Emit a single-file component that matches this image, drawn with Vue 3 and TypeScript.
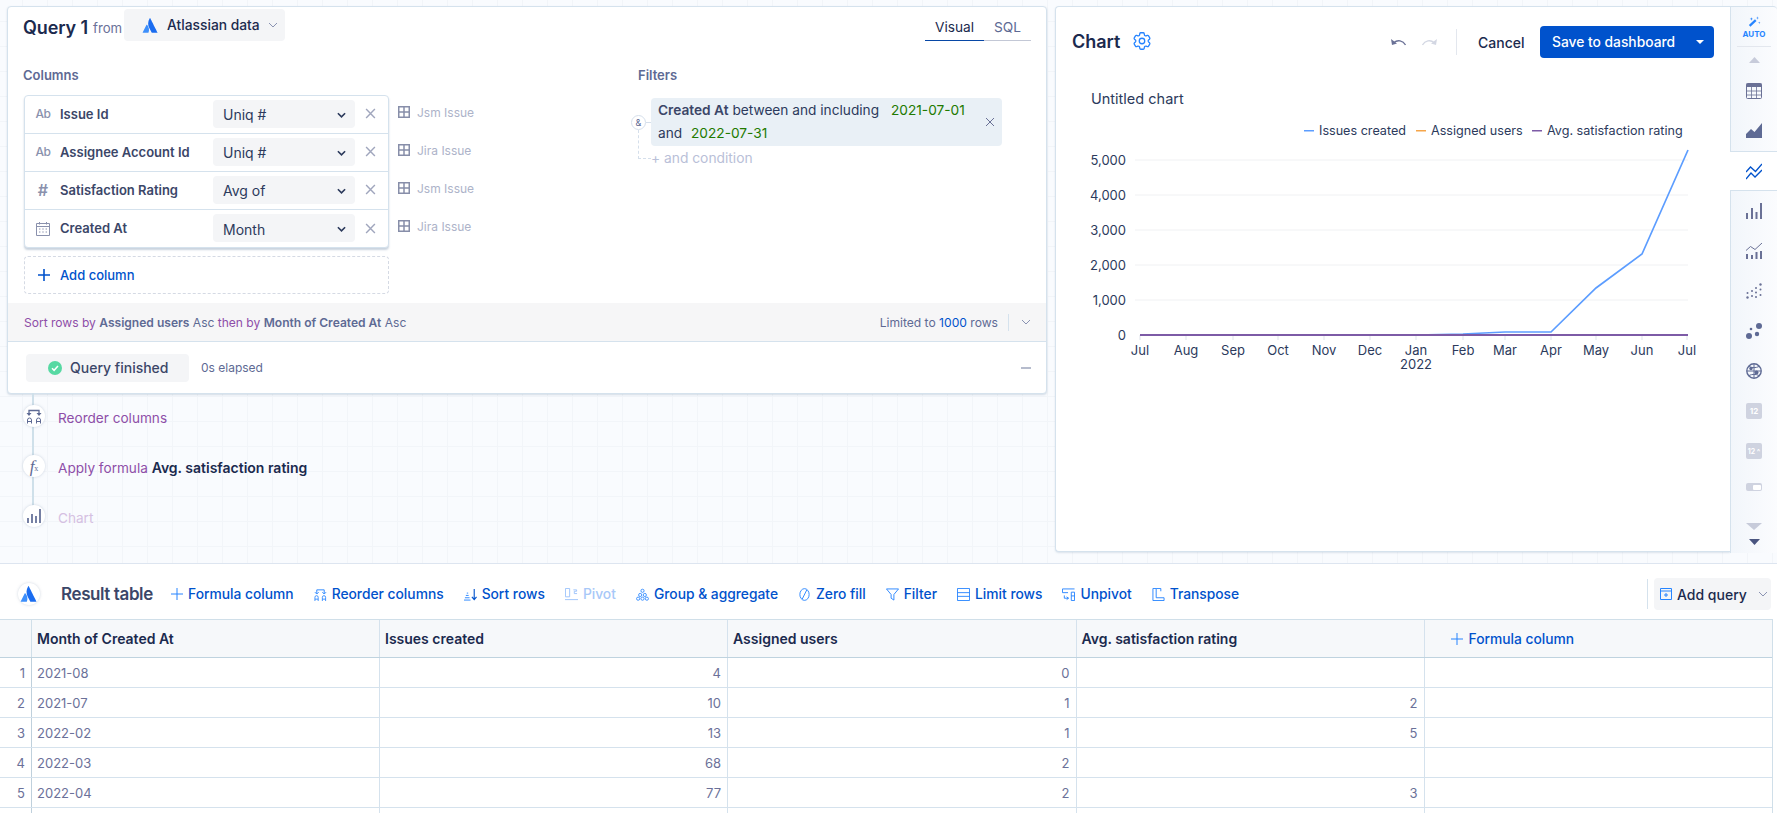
<script setup lang="ts">
interface ColumnRow { type: string; name: string; agg: string; table: string }
const columns: ColumnRow[] = [
  { type: 'ab', name: 'Issue Id', agg: 'Uniq #', table: 'Jsm Issue' },
  { type: 'ab', name: 'Assignee Account Id', agg: 'Uniq #', table: 'Jira Issue' },
  { type: 'num', name: 'Satisfaction Rating', agg: 'Avg of', table: 'Jsm Issue' },
  { type: 'date', name: 'Created At', agg: 'Month', table: 'Jira Issue' },
]
const rows: (string | number)[][] = [
  ['2021-08', 4, 0, ''],
  ['2021-07', 10, 1, 2],
  ['2022-02', 13, 1, 5],
  ['2022-03', 68, 2, ''],
  ['2022-04', 77, 2, 3],
]
const gridY = [160, 195, 230, 265, 300]
const yLabels = ['5,000', '4,000', '3,000', '2,000', '1,000', '0']
const xTicks = [
  ['Jul', 1140], ['Aug', 1186], ['Sep', 1233], ['Oct', 1278], ['Nov', 1324], ['Dec', 1370], ['Jan', 1416],
  ['Feb', 1463], ['Mar', 1505], ['Apr', 1551], ['May', 1596], ['Jun', 1642], ['Jul', 1687],
] as [string, number][]
const bluePts = '1140,335 1416,335 1463,334 1505,332 1551,332 1596,288 1642,254 1688,150'
const legend = [
  { x: 1304, color: '#5c9dff', label: 'Issues created' },
  { x: 1416, color: '#f5a54a', label: 'Assigned users' },
  { x: 1532, color: '#7d5ba6', label: 'Avg. satisfaction rating' },
]
</script>

<template>
  <div class="app">
    <div class="canvas">
      <div class="left">
        <section class="query-card">
          <header class="query-head">
            <h1 class="query-title">Query 1</h1>
            <span class="from">from</span>
            <div class="source-chip">
              <svg class="logo" viewBox="0 0 24 24"><path fill="#3d8ffb" d="M7.12 11.08c-.25-.32-.71-.28-.9.09L1.06 21.5a.53.53 0 0 0 .47.77h7.2a.52.52 0 0 0 .47-.3c1.55-3.2.61-8.07-2.08-10.89z"/><path fill="#1a6cf0" d="M10.92 1.73c-2.9 4.6-2.7 9.7-.8 13.5l3.5 6.74a.53.53 0 0 0 .47.3h7.2a.53.53 0 0 0 .47-.77S11.9 2.2 11.72 1.73a.45.45 0 0 0-.8 0z"/></svg>
              <span>Atlassian data</span>
              <svg class="chev" viewBox="0 0 10 6"><path d="M1 1l4 4 4-4" fill="none" stroke="#8a93b2" stroke-width="1"/></svg>
            </div>
            <div class="tabs">
              <span class="tab active">Visual</span>
              <span class="tab">SQL</span>
            </div>
          </header>
          <div class="builder">
            <div class="col-area">
              <h2 class="label">Columns</h2>
              <div class="col-wrap">
                <div class="col-list">
                  <div v-for="c in columns" :key="c.name" class="col-row">
                    <span class="type-ic">
                      <span v-if="c.type === 'ab'" class="ab">Ab</span>
                      <span v-else-if="c.type === 'num'" class="hash">#</span>
                      <svg v-else viewBox="0 0 14 15" width="14" height="15"><path d="M.5 2.5h13v12H.5zM.5 5.5h13M3.5 1v2.5M10.5 1v2.5" fill="none" stroke="#8a91ad"/><path d="M3 8h1.4M6.3 8h1.4M9.6 8H11M3 11h1.4M6.3 11h1.4M9.6 11H11" stroke="#8a91ad"/></svg>
                    </span>
                    <span class="col-name">{{ c.name }}</span>
                    <div class="agg">
                      <span>{{ c.agg }}</span>
                      <svg viewBox="0 0 10 6" width="9" height="6"><path d="M1 1l4 4 4-4" fill="none" stroke="#2c3a5c" stroke-width="1.8"/></svg>
                    </div>
                    <svg class="x" viewBox="0 0 10 10" width="11" height="11"><path d="M1 1l8 8M9 1L1 9" stroke="#a0a6bd" stroke-width="1.3"/></svg>
                  </div>
                </div>
                <div class="col-tables">
                  <div v-for="c in columns" :key="c.name + 't'" class="col-table">
                    <svg viewBox="0 0 12 12" width="12" height="12"><path d="M.75.75h10.5v10.5H.75zM6 .75v10.5M.75 6h10.5" fill="none" stroke="#878ea9" stroke-width="1.5"/></svg>
                    <span>{{ c.table }}</span>
                  </div>
                </div>
              </div>
              <div class="add-col">
                <svg viewBox="0 0 12 12" width="12" height="12"><path d="M6 0v12M0 6h12" stroke="#0052cc" stroke-width="1.6"/></svg>
                <span>Add column</span>
              </div>
            </div>
            <div class="filter-area">
              <h2 class="label">Filters</h2>
              <div class="filter-body">
                <div class="connector">
                  <span class="amp">&amp;</span>
                  <span class="conn-h"></span>
                  <span class="conn-v"></span>
                </div>
                <div class="filter-main">
                  <div class="filter-chip">
                    <p class="filter-text"><b>Created At</b> between and including <em class="val first">2021-07-01</em><br>and <em class="val">2022-07-31</em></p>
                    <svg viewBox="0 0 10 10" width="10" height="10"><path d="M1 1l8 8M9 1L1 9" stroke="#6a7196" stroke-width="1"/></svg>
                  </div>
                  <div class="and-cond">+ and condition</div>
                </div>
              </div>
            </div>
          </div>
          <div class="sort-bar">
            <p class="sort-text">Sort rows by <b>Assigned users</b> <i>Asc</i> then by <b>Month of Created At</b> <i>Asc</i></p>
            <div class="limit">
              <span>Limited to <strong>1000</strong> rows</span>
              <span class="sort-sep"></span>
              <svg viewBox="0 0 10 6" width="10" height="6"><path d="M1 1l4 4 4-4" fill="none" stroke="#8a93b2"/></svg>
            </div>
          </div>
          <div class="status">
            <div class="status-chip">
              <svg viewBox="0 0 14 14" width="14" height="14"><circle cx="7" cy="7" r="7" fill="#57d9a3"/><path d="M4 7.2l2.1 2.1L10 5" fill="none" stroke="#fff" stroke-width="1.5"/></svg>
              <span>Query finished</span>
            </div>
            <span class="elapsed">0s elapsed</span>
            <span class="minimize"></span>
          </div>
        </section>
        <ol class="steps">
          <li class="step">
            <span class="step-ic"><svg viewBox="0 0 16 16" width="16" height="16"><path d="M3 7V2.500h10V7" fill="none" stroke="#5e6a94" stroke-width="1.300"/><path d="M.5 5h5L3 8zM10.500 5h5L13 8z" fill="#5e6a94"/><path d="M1.500 15.500v-3.500a2 2 0 0 1 4 0v3.500M1.500 13.500h4M10.500 15.500v-3.500a2 2 0 0 1 4 0v3.500M10.500 13.500h4" fill="none" stroke="#5e6a94"/></svg></span>
            <span class="step-text">Reorder columns</span>
          </li>
          <li class="step">
            <span class="step-ic fx"><i>f</i><small>x</small></span>
            <span class="step-text">Apply formula <b>Avg. satisfaction rating</b></span>
          </li>
          <li class="step">
            <span class="step-ic"><svg viewBox="0 0 14 14" width="14" height="14"><path d="M1 14V9M5 14V5M9 14V7M13 14V0" stroke="#5e6a94" stroke-width="1.7"/></svg></span>
            <span class="step-text faded">Chart</span>
          </li>
        </ol>
      </div>

      <section class="chart-card">
        <header class="chart-head">
          <h2 class="chart-title">Chart</h2>
          <svg class="gear" viewBox="0 0 24 24" width="22" height="22"><path fill="none" stroke="#2684ff" stroke-width="1.4" d="M9.594 3.94c.09-.542.56-.94 1.11-.94h2.593c.55 0 1.02.398 1.11.94l.213 1.281c.063.374.313.686.645.87.074.04.147.083.22.127.325.196.72.257 1.075.124l1.217-.456a1.125 1.125 0 0 1 1.37.49l1.296 2.247a1.125 1.125 0 0 1-.26 1.431l-1.003.827c-.293.241-.438.613-.43.992a7.723 7.723 0 0 1 0 .255c-.008.378.137.75.43.991l1.004.827c.424.35.534.955.26 1.43l-1.298 2.247a1.125 1.125 0 0 1-1.369.491l-1.217-.456c-.355-.133-.75-.072-1.076.124a6.47 6.47 0 0 1-.22.128c-.331.183-.581.495-.644.869l-.213 1.281c-.09.543-.56.94-1.11.94h-2.594c-.55 0-1.019-.398-1.11-.94l-.213-1.281c-.062-.374-.312-.686-.644-.87a6.52 6.52 0 0 1-.22-.127c-.325-.196-.72-.257-1.076-.124l-1.217.456a1.125 1.125 0 0 1-1.369-.49l-1.297-2.247a1.125 1.125 0 0 1 .26-1.431l1.004-.827c.292-.24.437-.613.43-.991a6.932 6.932 0 0 1 0-.255c.007-.38-.138-.751-.43-.992l-1.004-.827a1.125 1.125 0 0 1-.26-1.43l1.297-2.247a1.125 1.125 0 0 1 1.37-.491l1.216.456c.356.133.751.072 1.076-.124.072-.044.146-.086.22-.128.332-.183.582-.495.644-.869l.214-1.28Z"/><circle cx="12" cy="12" r="3" fill="none" stroke="#2684ff" stroke-width="1.4"/></svg>
          <div class="chart-actions">
            <svg viewBox="0 0 16 8" width="16" height="8"><path d="M15.500 7C13 2.500 7.500 1.500 4 4.500" fill="none" stroke="#6a7196" stroke-width="1.300"/><path d="M1 1l1 6 5-1.500z" fill="#6a7196"/></svg>
            <svg class="redo" viewBox="0 0 16 8" width="16" height="8"><path d="M.5 7C3 2.500 8.500 1.500 12 4.500" fill="none" stroke="#d3d7e3" stroke-width="1.300"/><path d="M15 1l-1 6-5-1.500z" fill="#d3d7e3"/></svg>
            <span class="act-sep"></span>
            <span class="cancel">Cancel</span>
            <div class="save">
              <span class="save-label">Save to dashboard</span>
              <svg viewBox="0 0 8 4" width="8" height="4"><path d="M0 0h8L4 4z" fill="#fff"/></svg>
            </div>
          </div>
        </header>
        <svg class="plot" viewBox="1056 77 673 300" width="673" height="300">
          <text x="1091" y="104" class="c-title">Untitled chart</text>
          <g v-for="l in legend" :key="l.label">
            <rect :x="l.x" y="130" width="10" height="1.5" :fill="l.color" />
            <text :x="l.x + 15" y="135" class="c-legend">{{ l.label }}</text>
          </g>
          <line v-for="y in gridY" :key="y" x1="1135" :y1="y" x2="1688" :y2="y" stroke="#f0f1f3" />
          <text v-for="(l, i) in yLabels" :key="l" x="1126" :y="165 + i * 35" text-anchor="end" class="c-text">{{ l }}</text>
          <line v-for="t in xTicks" :key="t[1]" :x1="t[1]" y1="335" :x2="t[1]" y2="340" stroke="#dfe3ea" />
          <text v-for="t in xTicks" :key="t[0] + t[1]" :x="t[1]" y="355" text-anchor="middle" class="c-text">{{ t[0] }}</text>
          <text x="1416" y="369" text-anchor="middle" class="c-text">2022</text>
          <polyline :points="bluePts" fill="none" stroke="#5c9dff" stroke-width="1.7" />
          <line x1="1140" y1="335" x2="1688" y2="335" stroke="#f5a54a" stroke-width="1.500" />
          <line x1="1140" y1="335" x2="1688" y2="335" stroke="#7d5ba6" stroke-width="2" />
        </svg>
      </section>

      <aside class="types">
        <div class="type-sec upper">
          <div class="auto">
            <svg viewBox="0 0 16 12" width="14" height="11"><path d="M3 11L10 4.500" stroke="#2684ff" stroke-width="2.600"/><path d="M5 1l.5 1.500L7 3 5.500 3.500 5 5l-.5-1.500L3 3l1.500-.5zM12 0l.4 1.600L14 2l-1.600.4L12 4l-.4-1.600L10 2l1.600-.4zM14 6l.3 1.200 1.200.3-1.200.3L14 9l-.3-1.200-1.200-.3 1.200-.3z" fill="#2684ff"/></svg>
            <span>AUTO</span>
          </div>
          <div class="tri-row"><svg viewBox="0 0 11 6" width="11" height="6"><path d="M0 6h11L5.500 0z" fill="#c7cbda"/></svg></div>
          <div class="ic-row"><svg viewBox="0 0 16 16" width="16" height="16"><rect x=".5" y=".5" width="15" height="15" rx="1" fill="none" stroke="#6a7196"/><rect x=".5" y=".5" width="15" height="3.500" fill="#6a7196"/><path d="M.5 8h15M.5 12h15M5.500 4v12M10.500 4v12" stroke="#6a7196" stroke-width=".8"/></svg></div>
          <div class="ic-row"><svg viewBox="0 0 16 16" width="16" height="16"><path d="M0 15l0-4 5-5 3.500 3L16 0v15z" fill="#5e6a94"/></svg></div>
        </div>
        <div class="type-sec active-type">
          <svg viewBox="0 0 16 17" width="16" height="17"><path d="M0 9l4.500-5 5 4.500L16 1M0 16l5-6 4 4 7-7" fill="none" stroke="#0052cc" stroke-width="1.300"/></svg>
        </div>
        <div class="type-sec lower">
          <div class="ic-row"><svg viewBox="0 0 16 16" width="16" height="16"><path d="M1 16v-6M6 16V5M10.500 16v-7M15 16V0" stroke="#6a7196" stroke-width="2"/></svg></div>
          <div class="ic-row"><svg viewBox="0 0 16 16" width="16" height="16"><path d="M1 16v-5M6 16v-4M10.500 16v-7M15 16V8" stroke="#6a7196" stroke-width="2"/><path d="M0 7.500l4.500-4 4.500 3L16 0" fill="none" stroke="#6a7196"/></svg></div>
          <div class="ic-row"><svg viewBox="0 0 16 16" width="16" height="16"><g fill="#6a7196"><circle cx="1.500" cy="14.500" r="1.200"/><circle cx="1.500" cy="10" r="1"/><circle cx="6" cy="13" r="1"/><circle cx="6" cy="8" r="1"/><circle cx="10" cy="14" r="1"/><circle cx="10" cy="9.500" r="1"/><circle cx="10" cy="5" r="1"/><circle cx="14.500" cy="12" r="1"/><circle cx="14.500" cy="6.500" r="1"/><circle cx="14.500" cy="1.500" r="1.200"/></g></svg></div>
          <div class="ic-row"><svg viewBox="0 0 16 16" width="16" height="16"><g fill="#5e6a94"><circle cx="3" cy="13" r="3"/><circle cx="11" cy="11" r="2.200"/><circle cx="5" cy="6" r="1.300"/><circle cx="13" cy="3" r="3"/></g></svg></div>
          <div class="ic-row"><svg viewBox="0 0 16 16" width="16" height="16"><circle cx="8" cy="8" r="7.200" fill="none" stroke="#5e6a94" stroke-width="1.400"/><path d="M1 8h14M8 1v14M3 3.500c3 1.500 7 1.500 10 0M3 12.500c3-1.500 7-1.500 10 0" fill="none" stroke="#5e6a94"/><circle cx="5" cy="5.500" r="1.700" fill="#5e6a94"/><circle cx="10.500" cy="9.500" r="2" fill="#5e6a94"/></svg></div>
          <div class="ic-row"><span class="num-box">12</span></div>
          <div class="ic-row"><span class="num-box small">12 ^</span></div>
          <div class="ic-row ic-high"><span class="toggle"><span></span></span></div>
          <div class="ic-row ic-high"><svg viewBox="0 0 16 7" width="16" height="7"><path d="M0 0h16L8 7z" fill="#c7cbda"/></svg></div>
          <div class="dark-row"><svg viewBox="0 0 11 6" width="11" height="6"><path d="M0 0h11L5.500 6z" fill="#4a5580"/></svg></div>
        </div>
      </aside>
    </div>

    <section class="result">
      <div class="toolbar">
        <span class="res-logo"><svg viewBox="0 0 24 24" width="18" height="18"><path fill="#3d8ffb" d="M7.12 11.08c-.25-.32-.71-.28-.9.09L1.06 21.5a.53.53 0 0 0 .47.77h7.2a.52.52 0 0 0 .47-.3c1.55-3.2.61-8.07-2.08-10.89z"/><path fill="#1a6cf0" d="M10.92 1.73c-2.9 4.6-2.7 9.7-.8 13.5l3.5 6.74a.53.53 0 0 0 .47.3h7.2a.53.53 0 0 0 .47-.77S11.9 2.2 11.72 1.73a.45.45 0 0 0-.8 0z"/></svg></span>
        <h2 class="res-title">Result table</h2>
        <div class="tools">
          <button class="tool"><svg viewBox="0 0 12 12" width="12" height="12"><path d="M6 0v12M0 6h12" stroke="#2684ff"/></svg><span>Formula column</span></button>
          <button class="tool"><svg viewBox="0 0 14 14" width="13" height="13"><path d="M3 6V2h8v4M1 4.500l2 2 2-2M9 4.500l2 2 2-2" fill="none" stroke="#2684ff"/><path d="M1 14v-4a1.500 1.500 0 0 1 3.500 0v4M1 12h3.500M9 14v-4a1.500 1.500 0 0 1 3.500 0v4M9 12h3.500" fill="none" stroke="#2684ff" stroke-width=".9"/></svg><span>Reorder columns</span></button>
          <button class="tool"><svg viewBox="0 0 14 14" width="13" height="13"><path d="M0 13h7M1 10.500h5M2 8h3M3 5.500h1.500" stroke="#2684ff"/><path d="M11 1v11M8.500 9.500L11 12.500l2.500-3" fill="none" stroke="#0052cc" stroke-width="1.200"/></svg><span>Sort rows</span></button>
          <button class="tool off"><svg viewBox="0 0 14 14" width="13" height="13"><path d="M.5.500h4.500v9H.5zM0 12.500h14" fill="none" stroke="#9cc2fb"/><path d="M9 2h3.500v1.500H10V6h3" fill="none" stroke="#9cc2fb"/></svg><span>Pivot</span></button>
          <button class="tool"><svg viewBox="0 0 14 14" width="13" height="13"><g fill="none" stroke="#2684ff" stroke-width=".9"><circle cx="7" cy="3" r="1.700"/><circle cx="4.500" cy="7.500" r="1.700"/><circle cx="9.500" cy="7.500" r="1.700"/><circle cx="2.300" cy="11.500" r="1.700"/><circle cx="7" cy="11.500" r="1.700"/><circle cx="11.700" cy="11.500" r="1.700"/></g></svg><span>Group &amp; aggregate</span></button>
          <button class="tool"><svg viewBox="0 0 14 14" width="13" height="13"><ellipse cx="7" cy="7" rx="5" ry="6.300" fill="none" stroke="#2684ff"/><path d="M4.500 12L9.500 2" stroke="#2684ff"/></svg><span>Zero fill</span></button>
          <button class="tool"><svg viewBox="0 0 14 14" width="13" height="13"><path d="M.5 1h13L8.500 7v6l-3-2V7z" fill="none" stroke="#2684ff"/></svg><span>Filter</span></button>
          <button class="tool"><svg viewBox="0 0 14 14" width="13" height="13"><path d="M.5.500h13v13H.5zM.5 5h13M.5 9h13" fill="none" stroke="#2684ff"/></svg><span>Limit rows</span></button>
          <button class="tool"><svg viewBox="0 0 14 14" width="13" height="13"><path d="M.5 1h13M.5 1v4h6M10 4.500h3.500v9H10zM10 8.500h3.500" fill="none" stroke="#2684ff"/><path d="M2.500 8v3H7M5 9.500l2 1.500-2 1.500" fill="none" stroke="#2684ff"/></svg><span>Unpivot</span></button>
          <button class="tool"><svg viewBox="0 0 14 14" width="13" height="13"><path d="M1 13.500h12v-3H4.500V.5H1zM4.500.5h5v3" fill="none" stroke="#2684ff"/></svg><span>Transpose</span></button>
        </div>
        <span class="tool-sep"></span>
        <div class="add-query">
          <svg viewBox="0 0 12 12" width="12" height="12"><path d="M.5.500h11v11H.5zM.5 3h11" fill="none" stroke="#2684ff"/><path d="M6 5v4M4 7h4" stroke="#2684ff"/></svg>
          <span>Add query</span>
          <svg class="q-chev" viewBox="0 0 10 6" width="10" height="6"><path d="M1 1l4 4 4-4" fill="none" stroke="#8a93b2"/></svg>
        </div>
      </div>
      <div class="table">
        <div class="tr th">
          <div class="idx"></div>
          <div class="cell">Month of Created At</div>
          <div class="cell">Issues created</div>
          <div class="cell">Assigned users</div>
          <div class="cell">Avg. satisfaction rating</div>
          <div class="cell formula">
            <svg viewBox="0 0 12 12" width="12" height="12"><path d="M6 0v12M0 6h12" stroke="#2684ff"/></svg>
            <span>Formula column</span>
          </div>
        </div>
        <div v-for="(r, i) in rows" :key="i" class="tr">
          <div class="idx">{{ i + 1 }}</div>
          <div class="cell">{{ r[0] }}</div>
          <div class="cell num">{{ r[1] }}</div>
          <div class="cell num">{{ r[2] }}</div>
          <div class="cell num">{{ r[3] }}</div>
          <div class="cell"></div>
        </div>
        <div class="tr">
          <div class="idx"></div>
          <div class="cell"></div>
          <div class="cell"></div>
          <div class="cell"></div>
          <div class="cell"></div>
          <div class="cell"></div>
        </div>
      </div>
    </section>
  </div>
</template>

<style>
html, body { margin: 0; overflow: hidden; background: #fff; }
</style>

<style scoped>
* { box-sizing: border-box; }
h1, h2, p, ol { margin: 0; padding: 0; }
.app {
  width: 1777px; height: 813px; overflow: hidden; display: flex; flex-direction: column;
  font-family: Inter, "Noto Sans", sans-serif; color: #1b2a4e; font-size: 13px;
}
.canvas {
  height: 563px; flex: none; display: flex; align-items: flex-start; padding-top: 6px; padding-left: 7px;
  background-color: #f9fbfe;
  background-image: linear-gradient(#f2f5f9 1px, transparent 1px), linear-gradient(90deg, #f2f5f9 1px, transparent 1px);
  background-size: 25px 25px; background-position: 22px 21px;
}
.left { width: 1040px; flex: none; }
.query-card {
  height: 388px; background: #fff; border: 1px solid #d5e2ed; border-radius: 4px;
  box-shadow: 0 1px 2px rgba(100, 130, 160, .25); display: flex; flex-direction: column; overflow: hidden;
}
.query-head { height: 38px; display: flex; align-items: flex-start; padding-left: 15px; padding-right: 15px; flex: none; }
.query-title { font-size: 18px; font-weight: 600; line-height: 20px; margin-top: 11px; letter-spacing: -.1px; }
.from { font-size: 13.200px; color: #6b7199; margin-left: 5px; margin-top: 12px; line-height: 18px; width: 31px; }
.source-chip {
  margin-top: 2px; width: 161px; height: 32px; background: #f4f5f7; border-radius: 4px;
  display: flex; align-items: center; padding-left: 18px; font-size: 13.800px; font-weight: 500;
}
.logo { width: 17px; height: 17px; margin-right: 8px; }
.chev { width: 10px; height: 6px; margin-left: 8px; }
.tabs { margin-left: auto; display: flex; margin-top: 6px; }
.tab { height: 28px; padding: 5px 0 0 10px; width: 47px; font-size: 13.700px; color: #5e6a94; border-bottom: 1px solid #c3c8d6; line-height: 18px; }
.tab.active { width: 59px; padding-left: 10px; color: #1b2a4e; border-bottom: 1px solid #0747a6; }
.builder { flex: 1; display: flex; padding: 21px 0 0 15px; min-height: 0; }
.label { font-size: 13px; font-weight: 600; color: #5e6a94; line-height: 18px; height: 23px; }
.col-area { width: 615px; }
.col-wrap { display: flex; margin-top: 6px; margin-left: 1px; }
.col-list {
  width: 365px; border: 1px solid #d5e2ed; border-radius: 4px; box-shadow: 0 2px 2px rgba(100, 130, 160, .35);
  background: #fff; flex: none;
}
.col-row { height: 38px; display: flex; align-items: center; padding-left: 11px; padding-bottom: 2px; border-bottom: 1px solid #d5e2ed; }
.col-row:last-child { border-bottom: 0; height: 37px; padding-bottom: 1px; }
.type-ic { width: 14px; display: flex; justify-content: center; flex: none; }
.ab { font-size: 12px; color: #8a91ad; font-weight: 500; letter-spacing: -.5px; }
.hash { font-size: 16px; color: #8a91ad; font-weight: 600; }
.col-name { margin-left: 10px; width: 153px; font-weight: 600; font-size: 13px; color: #3b4668; white-space: nowrap; flex: none; }
.agg {
  width: 142px; height: 28px; background: #f4f5f7; border-radius: 4px; display: flex; align-items: center; flex: none;
  justify-content: space-between; padding: 2px 9px 0 10px; font-size: 14px; color: #2c3a5c;
}
.x { margin-left: 10px; flex: none; }
.col-tables { margin-left: 9px; }
.col-table { height: 38px; display: flex; align-items: center; color: #adb3c9; font-size: 12px; gap: 7px; padding-bottom: 4px; }
.add-col {
  width: 365px; height: 38px; margin-top: 8px; margin-left: 1px; border: 1px dashed #d5dae4; border-radius: 4px;
  display: flex; align-items: center; padding: 0 0 1px 13px; gap: 10px; color: #0052cc; font-size: 13px; font-weight: 500;
}
.filter-area { width: 400px; }
.filter-body { display: flex; margin-top: 9px; margin-left: -7px; position: relative; }
.connector { width: 20px; position: relative; flex: none; }
.amp {
  position: absolute; left: 0; top: 17px; width: 15px; height: 15px; border-radius: 50%; border: 1px solid #d5dfeb;
  background: #fff; font-size: 9px; color: #5e6a94; display: flex; align-items: center; justify-content: center;
}
.conn-h { position: absolute; left: 15px; top: 24px; width: 5px; border-top: 1px solid #d5dfeb; }
.conn-v { position: absolute; left: 7px; top: 32px; height: 29px; width: 13px; border-left: 1px dashed #d5dfeb; border-bottom: 1px dashed #d5dfeb; }
.filter-chip {
  width: 351px; height: 48px; background: #e9f0f6; border-radius: 4px; display: flex; align-items: center;
  justify-content: space-between; padding: 0 7px 0 7px;
}
.filter-text { font-size: 13.700px; line-height: 23px; color: #2c3a5c; white-space: nowrap; }
.filter-text b { font-weight: 600; color: #3b4668; }
.val { font-style: normal; color: #217a00; margin-left: 5px; }
.val.first { margin-left: 8px; }
.and-cond { color: #b9c0d8; font-size: 13.800px; line-height: 18px; margin-top: 3px; }
.sort-bar {
  height: 39px; flex: none; background: #f6f6f7; border-bottom: 1px solid #d5e2ed; display: flex; align-items: center;
  justify-content: space-between; padding: 0 15px 0 16px; font-size: 12.050px;
}
.sort-text { color: #8e4ea8; }
.sort-text b { font-weight: 600; color: #5e6a94; }
.sort-text i { font-style: normal; color: #5e6a94; }
.limit { display: flex; align-items: center; color: #5e6a94; font-size: 12.100px; }
.limit strong { font-weight: 400; color: #0052cc; }
.sort-sep { height: 17px; width: 1px; background: #d5e2ed; margin: 0 12px 0 10px; }
.status { height: 51px; flex: none; display: flex; align-items: center; padding: 0 15px 0 18px; }
.status-chip {
  width: 163px; height: 28px; background: #f4f5f7; border-radius: 4px; display: flex; align-items: center;
  padding-left: 22px; gap: 8px; font-size: 14px; font-weight: 500; color: #3b4668;
}
.elapsed { margin-left: 12px; font-size: 12px; color: #5e6a94; }
.minimize { margin-left: auto; width: 10px; border-top: 2px solid #b6bccd; }
.steps { list-style: none; padding: 11px 0 0 16px; position: relative; }
.step { height: 50px; display: flex; align-items: flex-start; position: relative; }
.step::before { content: ""; position: absolute; left: 9px; top: -12px; height: 50px; width: 2px; background: #cfe0ea; }
.step:last-child::before { height: 14px; }
.step-ic {
  width: 22px; height: 22px; border-radius: 50%; background: #fff; box-shadow: 0 0 3px rgba(120, 140, 170, .35);
  display: flex; align-items: center; justify-content: center; position: relative; flex: none;
}
.fx { font-family: "Liberation Serif", serif; color: #5e6a94; font-size: 17px; line-height: 1; }
.fx small { font-size: 8px; margin-top: 5px; }
.step-text { margin-left: 13px; font-size: 13.600px; line-height: 26px; color: #8e4ea8; }
.step-text b { font-weight: 600; font-size: 14px; color: #1b2a4e; }
.step-text.faded { color: #d5c0e2; }

.chart-card {
  width: 675px; height: 546px; margin-left: 8px; flex: none; background: #fff; border: 1px solid #d5e2ed;
  border-right: 0; border-radius: 4px 0 0 4px; box-shadow: 0 1px 2px rgba(100, 130, 160, .2);
}
.chart-head { height: 70px; display: flex; align-items: center; padding: 0 16px 2px 16px; }
.chart-title { font-size: 18px; font-weight: 600; }
.gear { margin-left: 11px; }
.chart-actions { margin-left: auto; display: flex; align-items: center; margin-top: 2px; }
.redo { margin-left: 16px; }
.act-sep { width: 1px; height: 26px; background: #e3e7ee; margin: 0 21px 0 18px; }
.cancel { font-size: 14px; font-weight: 500; width: 62px; }
.save {
  width: 174px; height: 32px; background: #0052cc; border-radius: 4px; display: flex; align-items: center;
  justify-content: space-between; padding: 0 10px 0 12px; color: #fff; font-size: 13.800px; font-weight: 500;
}
.plot { display: block; }
.c-title { font: 400 14.500px Inter, sans-serif; fill: #2c3a5c; }
.c-text { font: 400 13px Inter, sans-serif; fill: #2c3a5c; }
.c-legend { font: 400 12.600px Inter, sans-serif; fill: #2c3a5c; }

.types { width: 47px; height: 546px; flex: none; display: flex; flex-direction: column; }
.type-sec { flex: none; }
.upper {
  height: 146px; background: linear-gradient(90deg, #f2f6fb, #fbfcfe); border: 1px solid #d5e2ed; border-right: 0;
  border-radius: 0 4px 0 0;
}
.active-type { height: 38px; display: flex; align-items: center; justify-content: center; background: #fff; }
.lower {
  flex: 1; background: linear-gradient(90deg, #f2f6fb, #fbfcfe); border-left: 1px solid #d5e2ed; border-top: 1px solid #d5e2ed;
}
.auto {
  height: 40px; margin: 0 6px; border-bottom: 1px solid #e3e7ee; display: flex; flex-direction: column; align-items: center;
  justify-content: flex-end; padding-bottom: 7px; color: #2684ff; font-size: 8px; font-weight: 700; gap: 2px;
}
.tri-row { height: 24px; display: flex; justify-content: center; align-items: flex-start; padding-top: 10px; }
.ic-row { height: 40px; display: flex; align-items: center; justify-content: center; }
.ic-row.ic-high { align-items: flex-start; padding-top: 12px; }
.dark-row { height: 14px; display: flex; justify-content: center; align-items: flex-start; margin-top: -12px; position: relative; }
.num-box {
  width: 16px; height: 16px; background: #cfd3e0; border-radius: 2px; color: #fff; font-size: 8px; font-weight: 700;
  display: flex; align-items: center; justify-content: center; white-space: nowrap;
}
.num-box.small { font-size: 7px; }
.toggle { width: 16px; height: 8px; background: #cfd3e0; border-radius: 2px; display: flex; justify-content: flex-end; align-items: center; padding-right: 1px; }
.toggle span { display: block; width: 8px; height: 5px; background: #fff; border-radius: 1px; }

.result { flex: 1; background: #fff; border-top: 1px solid #dde5f0; min-height: 0; }
.toolbar { height: 55px; display: flex; align-items: center; padding: 5px 6px 0 18px; }
.res-logo {
  width: 22px; height: 22px; border-radius: 50%; background: #fff; box-shadow: 0 0 3px rgba(120, 140, 170, .35);
  display: flex; align-items: center; justify-content: center; flex: none;
}
.res-title { font-size: 17px; font-weight: 600; color: #3b4668; margin-left: 21px; white-space: nowrap; letter-spacing: -.4px; width: 110px; flex: none; }
.tools { display: flex; gap: 20px; }
.tool {
  border: 0; background: none; padding: 0; font: 500 13.800px Inter, sans-serif; color: #0052cc; display: flex; align-items: center;
  gap: 5px; white-space: nowrap;
}
.tool.off { color: #a8c8f8; }
.tool-sep { margin-left: auto; width: 1px; height: 30px; background: #d5e2ed; flex: none; }
.add-query {
  width: 117px; height: 32px; margin-left: 6px; background: #f4f5f7; border-radius: 4px; display: flex; align-items: center; flex: none;
  padding-left: 6px; gap: 5px; font-size: 14px; font-weight: 500; white-space: nowrap;
}
.q-chev { margin-left: 6px; flex: none; }
.table { width: 1773px; border-top: 1px solid #d0dfe9; border-right: 1px solid #d0dfe9; }
.tr { display: grid; grid-template-columns: 32px 348px 348px 348.500px 348px 348.500px; height: 30px; border-bottom: 1px solid #d5e2ed; }
.th { height: 38px; background: #f6f8fa; border-bottom: 1px solid #bfd3df; }
.idx { text-align: right; padding: 7px 6px 0 0; color: #6b7199; font-size: 13px; border-right: 1px solid #bfd0dc; }
.th .idx { border-right: 1px solid #d0dfe9; }
.cell { padding: 7px 6px 0 5px; color: #6b7199; font-size: 13px; border-right: 1px solid #d5e2ed; line-height: 16px; white-space: nowrap; }
.cell:last-child { border-right: 0; }
.cell.num { text-align: right; }
.th .cell { font-weight: 600; color: #1b2a4e; font-size: 14px; padding-top: 11px; }
.th .formula { color: #0052cc; font-weight: 500; display: flex; align-items: flex-start; gap: 6px; padding-left: 26px; font-size: 13.800px; }
.formula svg { margin-top: 2px; }
</style>
